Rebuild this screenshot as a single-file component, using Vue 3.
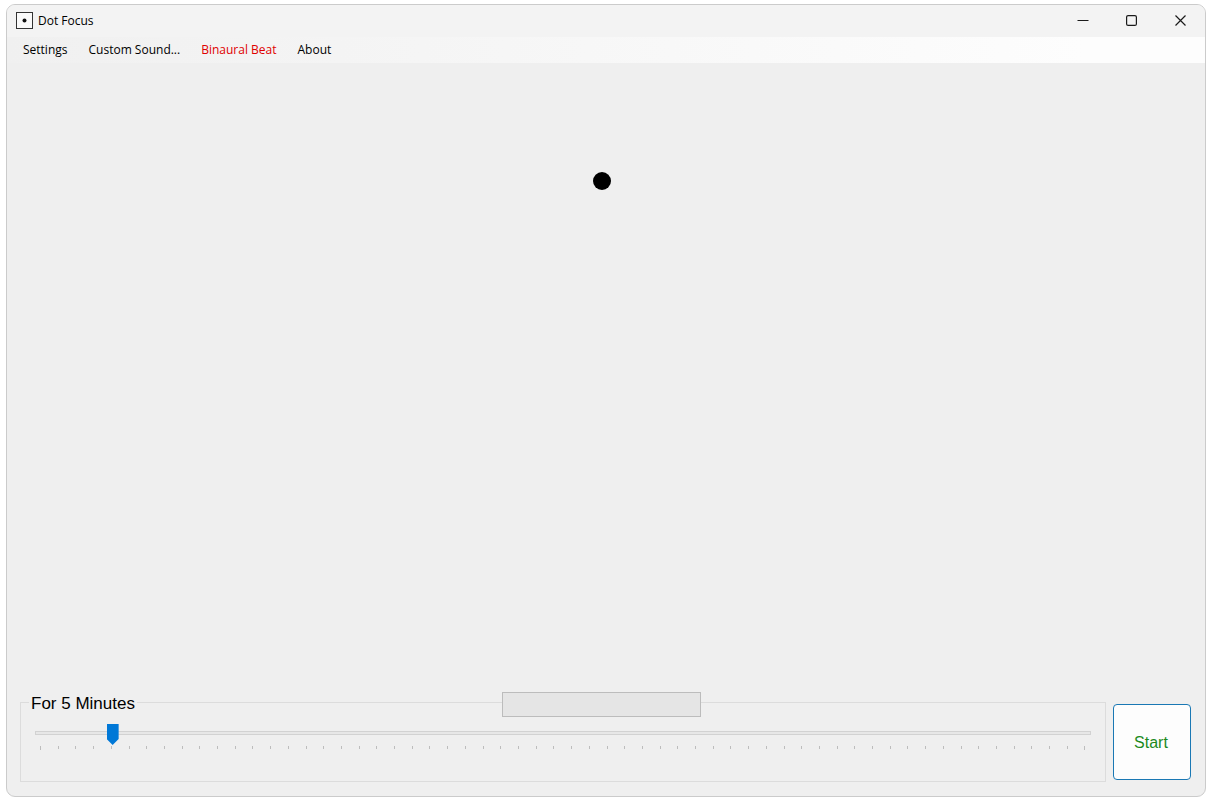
<script setup>
import { ref, computed } from 'vue'

const minutes = ref(5)
const ticks = 60
const label = computed(() => `For ${minutes.value} Minutes`)
const menu = [
  { text: 'Settings' },
  { text: 'Custom Sound...' },
  { text: 'Binaural Beat', alert: true },
  { text: 'About' }
]
</script>

<template>
  <div class="desktop">
    <main class="window">
      <header class="titlebar">
        <svg class="app-icon" width="18" height="18" viewBox="0 0 18 18" aria-hidden="true">
          <rect x="0.5" y="0.5" width="16" height="16" fill="#fafafa" stroke="#333" />
          <circle cx="8.5" cy="8.5" r="2" fill="#111" />
        </svg>
        <h1 class="title">Dot Focus</h1>
        <div class="controls">
          <button class="control" type="button" aria-label="Minimize">
            <svg width="12" height="12" viewBox="0 0 12 12"><path d="M0.5 5.5H11.5" /></svg>
          </button>
          <button class="control" type="button" aria-label="Maximize">
            <svg width="12" height="12" viewBox="0 0 12 12"><rect x="0.6" y="0.6" width="9.8" height="9.8" rx="1.5" /></svg>
          </button>
          <button class="control" type="button" aria-label="Close">
            <svg width="12" height="12" viewBox="0 0 12 12"><path d="M0.5 0.5L10.5 10.5M10.5 0.5L0.5 10.5" /></svg>
          </button>
        </div>
      </header>

      <nav class="menubar">
        <button
          v-for="item in menu"
          :key="item.text"
          type="button"
          class="menu-item"
          :class="{ alert: item.alert }"
        >{{ item.text }}</button>
      </nav>

      <section class="stage">
        <div class="dot"></div>
      </section>

      <footer class="footer">
        <fieldset class="group">
          <legend class="legend"><label for="duration">{{ label }}</label></legend>
          <input id="duration" v-model.number="minutes" class="slider" type="range" min="1" max="60" />
          <div class="ticks" aria-hidden="true">
            <span v-for="n in ticks" :key="n" class="tick"></span>
          </div>
        </fieldset>
        <button class="start" type="button">Start</button>
        <div class="session" role="progressbar" aria-label="Session progress" aria-valuenow="0"></div>
      </footer>
    </main>
  </div>
</template>

<style>
body {
  background: #fff;
}
</style>

<style scoped>
* {
  box-sizing: border-box;
}

.desktop {
  display: flex;
  min-height: 100vh;
  padding: 4px 4px 3px 6px;
  font-family: "Open Sans", "Noto Sans", sans-serif;
  color: #000;
}

.window {
  display: flex;
  flex: 1;
  flex-direction: column;
  overflow: hidden;
  border: 1px solid #cbcbcb;
  border-radius: 9px;
  background: #efefef;
}

.titlebar {
  display: flex;
  align-items: center;
  height: 32px;
  padding-left: 9px;
  background: #f3f3f3;
}

.title {
  margin: 0 0 0 4px;
  font-size: 12px;
  font-weight: 400;
  line-height: 16px;
}

.controls {
  display: flex;
  align-self: stretch;
  margin-left: auto;
}

.control {
  display: flex;
  align-items: center;
  justify-content: center;
  width: 49px;
  padding: 0;
  border: 0;
  background: transparent;
}

.control svg {
  fill: none;
  stroke: #1a1a1a;
  stroke-width: 1.2;
}

.menubar {
  display: flex;
  gap: 5px;
  height: 26px;
  padding-left: 8px;
  background: linear-gradient(to right, #f0f0f0, #fdfdfd 90%);
}

.menu-item {
  padding: 0 8px;
  border: 0;
  background: transparent;
  color: #000;
  font-family: inherit;
  font-size: 12px;
  line-height: 16px;
}

.menu-item.alert {
  color: #e00000;
}

.stage {
  display: flex;
  flex: 1;
  justify-content: center;
  padding: 109px 8px 0 0;
}

.dot {
  width: 18px;
  height: 18px;
  border-radius: 50%;
  background: #000;
}

.footer {
  position: relative;
  display: flex;
  align-items: flex-end;
  gap: 7px;
  padding: 0 14px 14px 13px;
  font-family: "Liberation Sans", Arial, sans-serif;
}

.group {
  flex: 1;
  min-width: 0;
  height: 90px;
  margin: 0;
  padding: 10px 14px 0;
  border: 1px solid #dcdcdc;
}

.legend {
  margin-left: -6px;
  padding: 4px 2px 0;
  font-size: 17px;
  line-height: 16px;
}

.slider {
  display: block;
  width: 100%;
  height: 22px;
  margin: 0;
  appearance: none;
  background: transparent;
}

.slider::-webkit-slider-runnable-track {
  height: 4px;
  border: 1px solid #d2d2d2;
  background: #e7e7e7;
}

.slider::-webkit-slider-thumb {
  width: 12px;
  height: 21px;
  margin-top: -8px;
  appearance: none;
  background: #0078d7;
  clip-path: polygon(0 0, 100% 0, 100% 72%, 50% 100%, 0 72%);
}

.ticks {
  display: flex;
  justify-content: space-between;
  padding: 2px 5px 0;
}

.tick {
  width: 1px;
  height: 3px;
  background: #bdbdbd;
}

.tick:first-child,
.tick:last-child {
  height: 4px;
}

.start {
  width: 78px;
  height: 76px;
  margin-bottom: 2px;
  padding: 2px 2px 0 0;
  border: 1px solid #1a78b4;
  border-radius: 4px;
  background: #fdfdfd;
  color: #1c8a1c;
  font-family: inherit;
  font-size: 16px;
}

.session {
  position: absolute;
  top: 0;
  left: calc(50% - 104px);
  width: 199px;
  height: 25px;
  border: 1px solid #bcbcbc;
  background: #e5e5e5;
}
</style>
